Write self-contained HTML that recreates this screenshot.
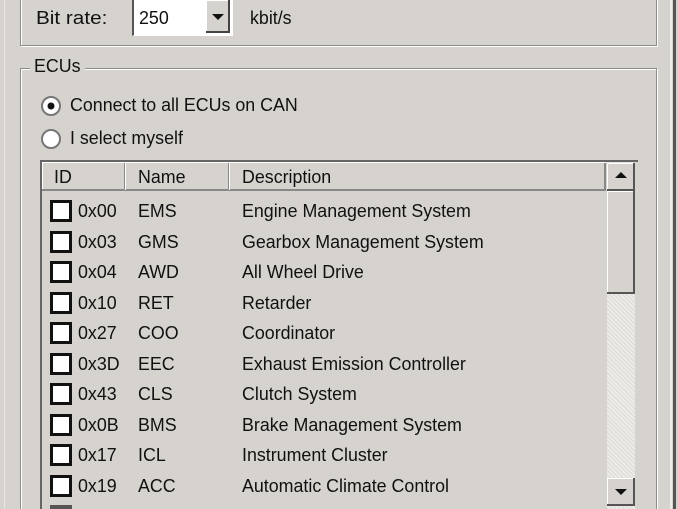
<!DOCTYPE html>
<html><head><style>
*{margin:0;padding:0;box-sizing:border-box}
html,body{width:678px;height:509px;overflow:hidden}
body{background:#d6d3ce;position:relative;font-family:"Liberation Sans",sans-serif;color:#111;font-size:18px}
.a{position:absolute}
.t{position:absolute;white-space:nowrap;transform-origin:0 0;transform:scaleX(0.99)}
.grp{position:absolute;border:1px solid #8e8c88;box-shadow:1px 1px 0 #fff, inset 1px 1px 0 #fff}
.cb{position:absolute;left:50px;width:22px;height:22px;background:#fff;border:3px solid #111}
</style></head><body>
<div class="a" style="left:4px;top:0;width:1px;height:509px;background:#e8e6e2"></div>
<div class="a" style="left:673px;top:0;width:3px;height:509px;background:#555"></div>
<div class="a" style="left:670px;top:0;width:2px;height:509px;background:#eeece8"></div>
<div class="grp" style="left:20px;top:-10px;width:637px;height:56px"></div>
<div class="t" style="left:36px;top:8px;transform:scaleX(1.15)">Bit rate:</div>
<div class="a" style="left:132px;top:-2px;width:101px;height:38px;border-top:2px solid #555;border-left:2px solid #555;border-right:1px solid #fff;border-bottom:1px solid #fff;background:#fff"></div>
<div class="t" style="left:139px;top:8px">250</div>
<div class="a" style="left:206px;top:0;width:24px;height:33px;background:#d6d3ce;border-right:2px solid #444;border-bottom:2px solid #444;box-shadow:inset 1px 1px 0 #fff"></div>
<svg class="a" style="left:211px;top:13px" width="14" height="8"><path d="M1 1H13L7 7Z" fill="#111"/></svg>
<div class="t" style="left:250px;top:8px">kbit/s</div>
<div class="grp" style="left:20px;top:68px;width:637px;height:460px"></div>
<div class="a" style="left:30px;top:56px;background:#d6d3ce;padding:0 4px"><span class="t" style="position:static;display:inline-block">ECUs</span></div>
<svg class="a" style="left:40px;top:95px" width="22" height="22"><circle cx="11" cy="11" r="9" fill="#fff" stroke="#777" stroke-width="2"/><circle cx="11" cy="11" r="3.5" fill="#111"/></svg>
<div class="t" style="left:70px;top:95px">Connect to all ECUs on CAN</div>
<svg class="a" style="left:40px;top:128px" width="22" height="22"><circle cx="11" cy="11" r="9" fill="#fff" stroke="#777" stroke-width="2"/></svg>
<div class="t" style="left:70px;top:128px">I select myself</div>
<div class="a" style="left:40px;top:160px;width:598px;height:360px;border-top:2px solid #666;border-left:2px solid #666;background:#d6d3ce"></div>
<div class="a" style="left:42px;top:162px;width:564px;height:29px;border-bottom:2px solid #888;box-shadow:inset 1px 1px 0 #fff"></div>
<div class="a" style="left:124px;top:163px;width:2px;height:27px;background:#888;border-right:1px solid #fff"></div>
<div class="a" style="left:228px;top:163px;width:2px;height:27px;background:#888;border-right:1px solid #fff"></div>
<div class="a" style="left:604px;top:163px;width:2px;height:27px;background:#888"></div>
<div class="t" style="left:54px;top:167px">ID</div>
<div class="t" style="left:138px;top:167px">Name</div>
<div class="t" style="left:242px;top:167px">Description</div>
<div class="a" style="left:607px;top:162px;width:28px;height:347px;background-color:#ecebe8;background-image:repeating-linear-gradient(45deg,#dcdad6 0 1px,transparent 1px 3px)"></div>
<div class="a" style="left:607px;top:163px;width:28px;height:28px;background:#d6d3ce;border-right:2px solid #555;border-bottom:2px solid #555;box-shadow:inset 1px 1px 0 #fff"></div>
<svg class="a" style="left:614px;top:171px" width="14" height="8"><path d="M1 7H13L7 1Z" fill="#111"/></svg>
<div class="a" style="left:607px;top:191px;width:28px;height:103px;background:#d6d3ce;border-right:2px solid #555;border-bottom:2px solid #555;box-shadow:inset 1px 1px 0 #fff"></div>
<div class="a" style="left:607px;top:478px;width:28px;height:28px;background:#d6d3ce;border-right:2px solid #555;border-bottom:2px solid #555;box-shadow:inset 1px 1px 0 #fff"></div>
<svg class="a" style="left:614px;top:488px" width="14" height="8"><path d="M1 1H13L7 7Z" fill="#111"/></svg>

<div class="cb" style="top:200px"></div><div class="t" style="left:78px;top:201px">0x00</div><div class="t" style="left:138px;top:201px">EMS</div><div class="t" style="left:242px;top:201px">Engine Management System</div>
<div class="cb" style="top:231px"></div><div class="t" style="left:78px;top:232px">0x03</div><div class="t" style="left:138px;top:232px">GMS</div><div class="t" style="left:242px;top:232px">Gearbox Management System</div>
<div class="cb" style="top:261px"></div><div class="t" style="left:78px;top:262px">0x04</div><div class="t" style="left:138px;top:262px">AWD</div><div class="t" style="left:242px;top:262px">All Wheel Drive</div>
<div class="cb" style="top:292px"></div><div class="t" style="left:78px;top:293px">0x10</div><div class="t" style="left:138px;top:293px">RET</div><div class="t" style="left:242px;top:293px">Retarder</div>
<div class="cb" style="top:322px"></div><div class="t" style="left:78px;top:323px">0x27</div><div class="t" style="left:138px;top:323px">COO</div><div class="t" style="left:242px;top:323px">Coordinator</div>
<div class="cb" style="top:353px"></div><div class="t" style="left:78px;top:354px">0x3D</div><div class="t" style="left:138px;top:354px">EEC</div><div class="t" style="left:242px;top:354px">Exhaust Emission Controller</div>
<div class="cb" style="top:383px"></div><div class="t" style="left:78px;top:384px">0x43</div><div class="t" style="left:138px;top:384px">CLS</div><div class="t" style="left:242px;top:384px">Clutch System</div>
<div class="cb" style="top:414px"></div><div class="t" style="left:78px;top:415px">0x0B</div><div class="t" style="left:138px;top:415px">BMS</div><div class="t" style="left:242px;top:415px">Brake Management System</div>
<div class="cb" style="top:444px"></div><div class="t" style="left:78px;top:445px">0x17</div><div class="t" style="left:138px;top:445px">ICL</div><div class="t" style="left:242px;top:445px">Instrument Cluster</div>
<div class="cb" style="top:475px"></div><div class="t" style="left:78px;top:476px">0x19</div><div class="t" style="left:138px;top:476px">ACC</div><div class="t" style="left:242px;top:476px">Automatic Climate Control</div>
<div class="a" style="left:50px;top:505px;width:22px;height:4px;background:#555"></div>
</body></html>
